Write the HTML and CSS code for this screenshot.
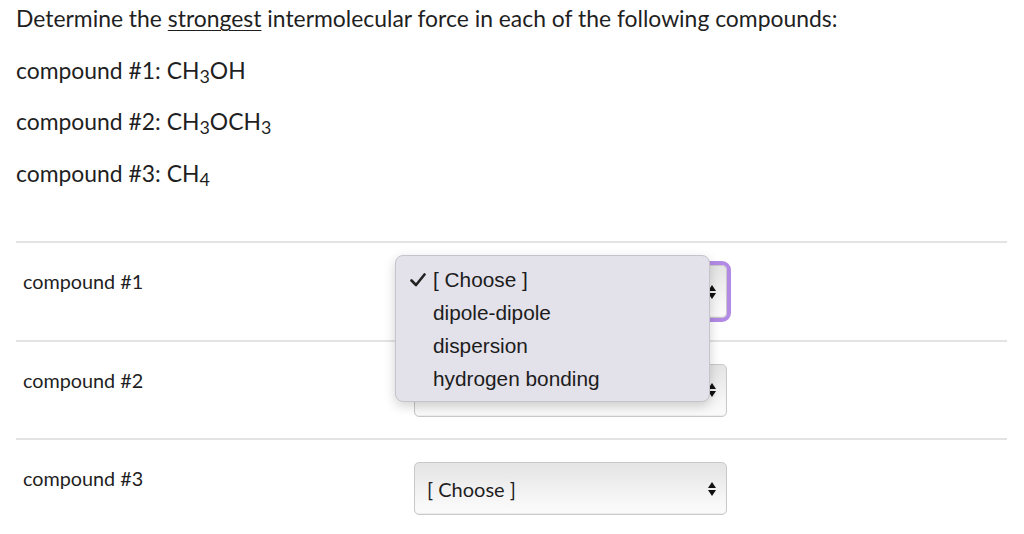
FILE: index.html
```html
<!DOCTYPE html>
<html>
<head>
<meta charset="utf-8">
<link rel="stylesheet" href="styles.css">
</head>
<body>
<div class="page">
  <div class="intro">
    <p>Determine the <u>strongest</u> intermolecular force in each of the following compounds:</p>
    <p>compound #1: CH<sub>3</sub>OH</p>
    <p>compound #2: CH<sub>3</sub>OCH<sub>3</sub></p>
    <p>compound #3: CH<sub>4</sub></p>
  </div>
  <div class="rows">
    <div class="row">
      <div class="label">compound #1</div>
      <div class="cell">
        <div class="select focused">
          <span class="value">[ Choose ]</span>
          <svg class="arrows" width="10" height="16" viewBox="0 0 10 16"><path d="M5 1 L9 7 L1 7 Z M1 9 L9 9 L5 15 Z" fill="#111"/></svg>
        </div>
        <div class="menu">
          <div class="item"><svg class="check" width="16" height="14" viewBox="0 0 16 14"><path d="M1.5 7.5 L6 12 L14.5 1.5" fill="none" stroke="#222" stroke-width="2.6" stroke-linecap="round" stroke-linejoin="round"/></svg>[ Choose ]</div>
          <div class="item">dipole-dipole</div>
          <div class="item">dispersion</div>
          <div class="item">hydrogen bonding</div>
        </div>
      </div>
    </div>
    <div class="row">
      <div class="label">compound #2</div>
      <div class="cell">
        <div class="select">
          <span class="value">[ Choose ]</span>
          <svg class="arrows" width="10" height="16" viewBox="0 0 10 16"><path d="M5 1 L9 7 L1 7 Z M1 9 L9 9 L5 15 Z" fill="#111"/></svg>
        </div>
      </div>
    </div>
    <div class="row">
      <div class="label">compound #3</div>
      <div class="cell">
        <div class="select">
          <span class="value">[ Choose ]</span>
          <svg class="arrows" width="10" height="16" viewBox="0 0 10 16"><path d="M5 1 L9 7 L1 7 Z M1 9 L9 9 L5 15 Z" fill="#111"/></svg>
        </div>
      </div>
    </div>
  </div>
</div>
</body>
</html>
```
FILE: styles.css
```css
html, body {
  margin: 0;
  padding: 0;
  background: #fff;
}
body {
  font-family: Lato, "Open Sans", sans-serif;
  color: #1f1f1f;
}
.page {
  padding: 2px 17px 0 16px;
}
.intro p {
  margin: 0 0 18px;
  font-size: 22.9px;
  line-height: 33.5px;
}
.intro sub {
  font-size: 0.78em;
  vertical-align: -0.22em;
  line-height: 0;
}
.intro u {
  text-decoration-thickness: 1px;
  text-underline-offset: 3px;
}
.rows {
  margin-top: 51px;
}
.row {
  display: grid;
  grid-template-columns: 398px 1fr;
  border-top: 2px solid #e3e3e3;
  padding-top: 22px;
  height: 74.5px;
}
.label {
  padding: 2px 0 0 7px;
  font-size: 19.8px;
  line-height: 28px;
}
.cell {
  position: relative;
}
.select {
  width: 313px;
  height: 53px;
  box-sizing: border-box;
  border: 1px solid #c9c9c9;
  border-radius: 5px;
  background: linear-gradient(#e4e4e4, #f6f6f6 70%, #fbfbfb);
  box-shadow: inset 0 -1px 1px rgba(0,0,0,0.06);
  display: flex;
  align-items: center;
  justify-content: space-between;
  padding: 0 9px 0 12px;
  font-size: 20px;
}
.select.focused {
  outline: 4px solid #b28ae6;
  outline-offset: 0;
}
.arrows {
  display: block;
  margin-top: 0;
}
.menu {
  position: absolute;
  top: -10px;
  left: -19px;
  width: 315px;
  box-sizing: border-box;
  padding: 7px 0 6px;
  background: #e3e1e9;
  border: 1px solid #c6c4cb;
  border-radius: 8px;
  box-shadow: 0 4px 12px rgba(0,0,0,0.18);
  font-family: "Liberation Sans", Arial, sans-serif;
  font-size: 20.8px;
  color: #1c1c1c;
  z-index: 10;
}
.item {
  position: relative;
  height: 33px;
  line-height: 33px;
  padding-left: 37px;
}
.check {
  position: absolute;
  left: 14px;
  top: 10px;
}
```
